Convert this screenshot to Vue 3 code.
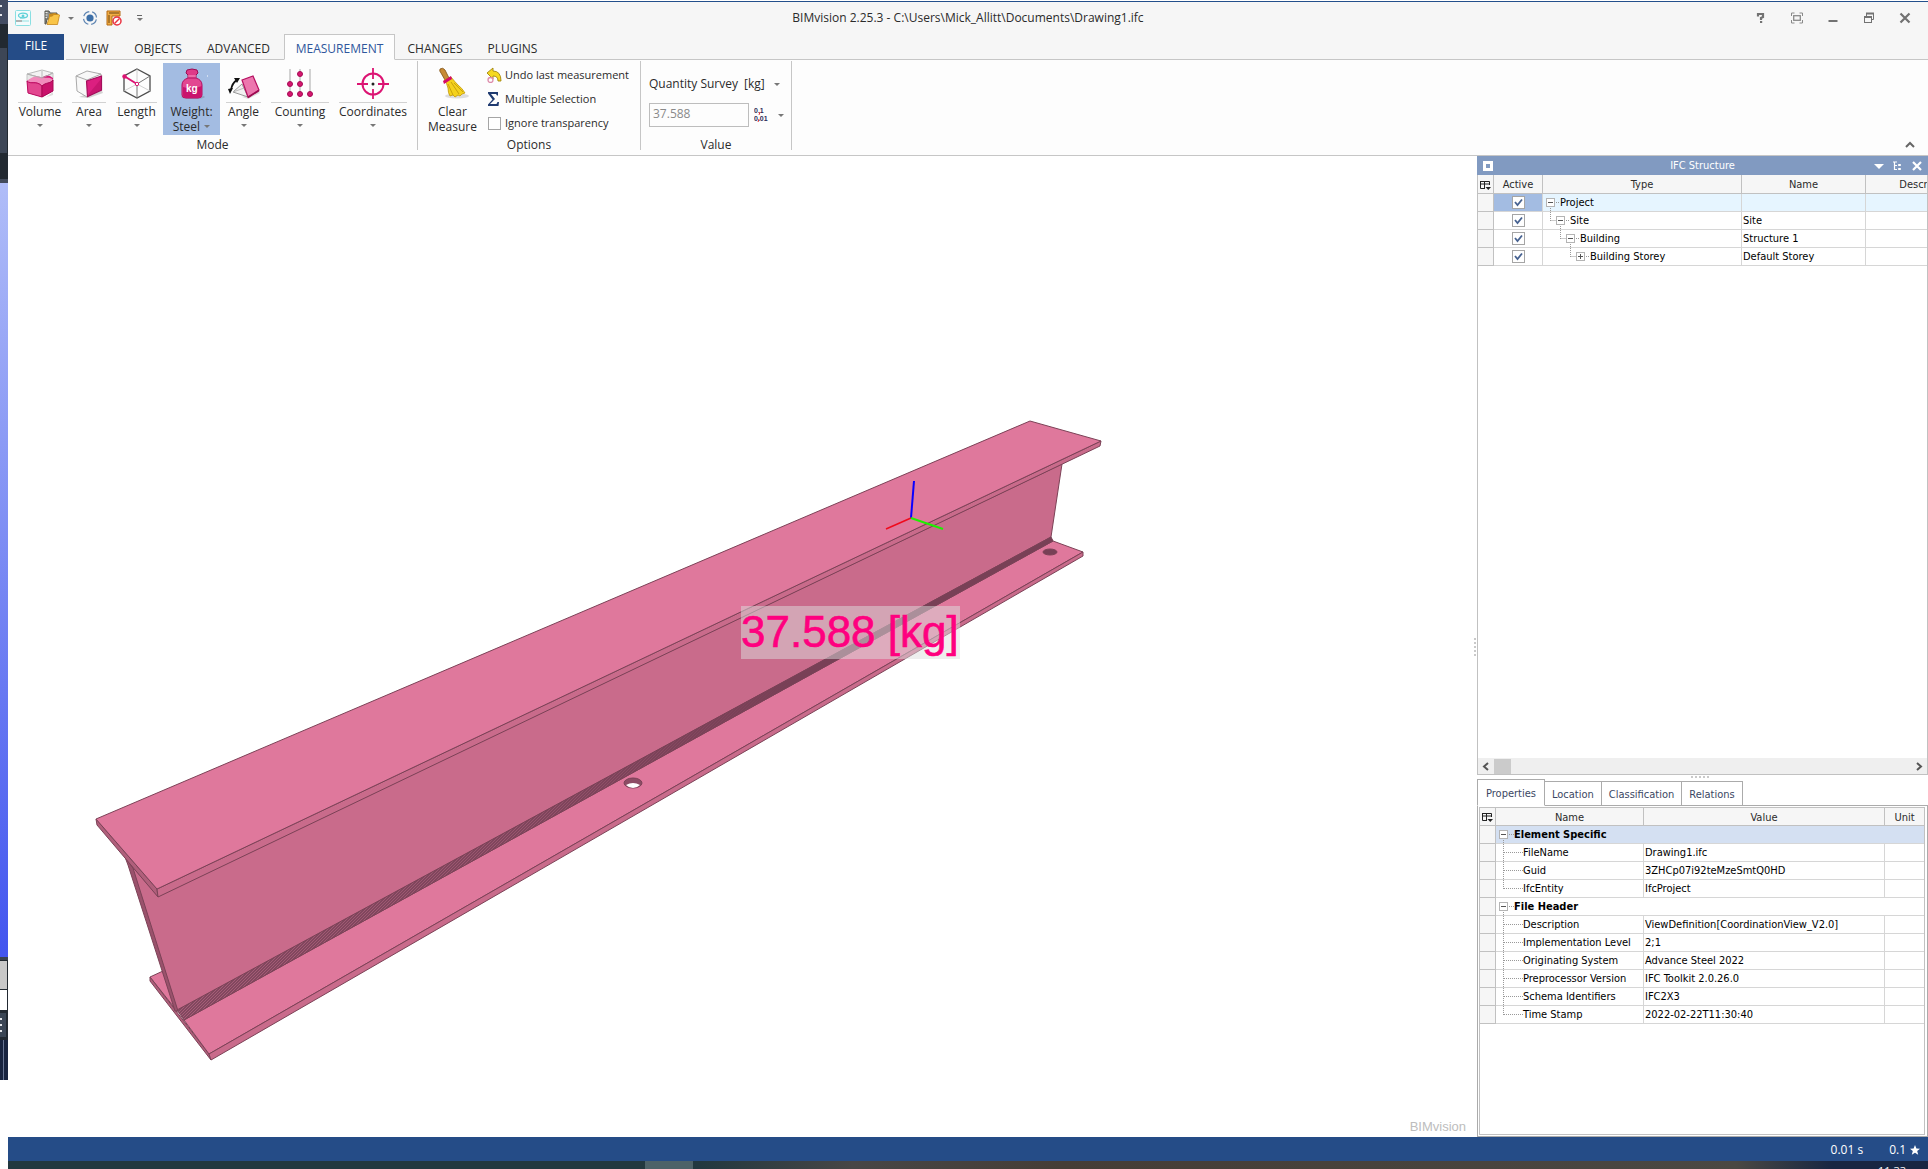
<script setup>
import { ref } from 'vue'

const tabs = [
  { name: 'VIEW', cls: 'w-view' },
  { name: 'OBJECTS', cls: 'w-objects' },
  { name: 'ADVANCED', cls: 'w-advanced' },
  { name: 'MEASUREMENT', cls: 'w-measurement' },
  { name: 'CHANGES', cls: 'w-changes' },
  { name: 'PLUGINS', cls: 'w-plugins' },
]
const activeTab = ref('MEASUREMENT')

const structure = ref([
  { type: 'Project', name: '', level: 0, open: true, active: true },
  { type: 'Site', name: 'Site', level: 1, open: true, active: true },
  { type: 'Building', name: 'Structure 1', level: 2, open: true, active: true },
  { type: 'Building Storey', name: 'Default Storey', level: 3, open: false, active: true },
])

const groups = [
  {
    title: 'Element Specific',
    rows: [
      ['FileName', 'Drawing1.ifc'],
      ['Guid', '3ZHCp07i92teMzeSmtQ0HD'],
      ['IfcEntity', 'IfcProject'],
    ],
  },
  {
    title: 'File Header',
    rows: [
      ['Description', 'ViewDefinition[CoordinationView_V2.0]'],
      ['Implementation Level', '2;1'],
      ['Originating System', 'Advance Steel 2022'],
      ['Preprocessor Version', 'IFC Toolkit 2.0.26.0'],
      ['Schema Identifiers', 'IFC2X3'],
      ['Time Stamp', '2022-02-22T11:30:40'],
    ],
  },
]

const infoTabs = ['Properties', 'Location', 'Classification', 'Relations']
const activeInfo = ref('Properties')
const multiple = ref(false)
const ignoreTransparency = ref(false)
</script>

<template>
  <div class="desktop">
    <div class="behind" aria-hidden="true">
      <i class="b1"><s></s><s></s></i><i class="b2"></i><i class="b3"></i><i class="b4"></i><i class="b5"></i>
      <i class="b6"></i><i class="b7"></i><i class="b8"></i><i class="b9"></i><i class="b10"><s></s><s></s><s></s></i><i class="b11"></i>
    </div>

    <div class="window">
      <header class="titlebar">
        <div class="quick">
          <button class="q-app" aria-label="Application menu">
            <svg width="16" height="16" viewBox="0 0 16 16"><rect x=".5" y=".5" width="15" height="15" rx="1" fill="#f4fbfc" stroke="#8adfe2"/><ellipse cx="8" cy="5.500" rx="4.500" ry="2.300" fill="none" stroke="#62d2d8" stroke-width="1.300"/><path d="M7 5h2v2H7zM5 8.500l5-.8" fill="#62d2d8" stroke="#62d2d8" stroke-width=".6"/><path d="M1 11h6" stroke="#8a8a8a" stroke-width="1.300"/><path d="M7 11h7" stroke="#a9e6e8" stroke-width="1.300"/></svg>
          </button>
          <button class="q-open" aria-label="Open">
            <svg width="16" height="16" viewBox="0 0 16 16"><path d="M1 1h4l1 2h7v6H3l-1 5H1z" fill="#8b8b86" stroke="#55544d"/><path d="M1.500 2.500h2M1.500 5h2M1.500 7.500h1.500" stroke="#e8e8e8"/><path d="M5 4l6-1 2 1v3H5z" fill="#c98b1c"/><path d="M5.500 6.500l3-.5 1-1.500h5l1 .5-2 9.500-10.500 0z" fill="#f9c548" stroke="#c5871a" stroke-width=".8"/></svg>
          </button>
          <button class="q-drop" aria-label="Recent files"><span class="arrow"></span></button>
          <button class="q-target" aria-label="Zoom to selection">
            <svg width="16" height="16" viewBox="0 0 16 16"><circle cx="8" cy="8" r="3.600" fill="#3c6fa8"/><circle cx="8" cy="8" r="6.500" fill="none" stroke="#5d84b2" stroke-width="1.200" stroke-dasharray="7.200 3" stroke-dashoffset="-1.500"/></svg>
          </button>
          <button class="q-ruler" aria-label="Hide measurements">
            <svg width="16" height="16" viewBox="0 0 16 16"><path d="M1 1h13v5H6v9H1z" fill="#f0ad45" stroke="#b66b13"/><path d="M4 2v2M6 2v2M8 2v2M10 2v2M12 2v2M2 6h2M2 8h2M2 10h2M2 12h2" stroke="#6d4510"/><circle cx="11" cy="11" r="4" fill="#fff" stroke="#ea3140" stroke-width="1.500"/><path d="M8.500 13.500l5-5" stroke="#ea3140" stroke-width="1.500"/></svg>
          </button>
          <button class="q-more" aria-label="Customize toolbar"><span class="more-line"></span><span class="arrow"></span></button>
        </div>
        <h1>BIMvision 2.25.3 - C:\Users\Mick_Allitt\Documents\Drawing1.ifc</h1>
        <div class="winbtns">
          <button aria-label="Help"><svg width="12" height="12" viewBox="0 0 12 12"><path d="M3 4.500V2h5v3L6 6v2" fill="none" stroke="#727272" stroke-width="2.200"/><path d="M5 9h2.200v2H5z" fill="#727272"/></svg></button>
          <button aria-label="Full screen"><svg width="12" height="12" viewBox="0 0 12 12"><path d="M.5 4V1h3M8.500 1h3v3M11.500 8v3h-3M3.500 11h-3V8" fill="none" stroke="#8a8a8a"/><rect x="2.700" y="3.700" width="6.600" height="4.600" fill="none" stroke="#8a8a8a" stroke-width="1.300"/></svg></button>
          <button aria-label="Minimize"><svg width="12" height="12" viewBox="0 0 12 12"><path d="M1.500 9h9" stroke="#727272" stroke-width="2"/></svg></button>
          <button aria-label="Restore"><svg width="12" height="12" viewBox="0 0 12 12"><path d="M3.500 4V1.500h7v6H9" fill="none" stroke="#727272"/><path d="M3 1.500h8M1 5h8" stroke="#727272" stroke-width="2"/><rect x="1.500" y="4.500" width="7" height="6" fill="none" stroke="#727272"/></svg></button>
          <button aria-label="Close"><svg width="12" height="12" viewBox="0 0 12 12"><path d="M1.500 1.500l9 9M10.500 1.500l-9 9" stroke="#727272" stroke-width="2.200"/></svg></button>
        </div>
      </header>

      <nav class="tabs">
        <button class="file">FILE</button>
        <button v-for="t in tabs" :key="t.name" class="tab" :class="[t.cls, { on: activeTab === t.name }]" @click="activeTab = t.name">{{ t.name }}</button>
        <span class="rest"></span>
      </nav>

      <section class="ribbon">
        <div class="group mode">
          <div class="tools">
            <button class="big w52">
              <svg class="ico" width="32" height="32" viewBox="0 0 32 32"><path d="M7 29l14 2 8-6v3l-9 3z" fill="#ddd"/><path d="M3 7l15-4 11 3-11 5z" fill="#f3f3f3" stroke="#bbb"/><path d="M3 7v8l15 4 11-5V6L18 11z" fill="#e8e8e8" stroke="#c4c4c4"/><path d="M3 14c5-4 8 2 13-2s8-5 13-1v13l-11 6L4 26z" fill="#d51876"/><path d="M3 14c4 4 9-2 15 5 4-4 8-1 11-6-3-4-7-1-12-3s-9 0-14 4z" fill="#f18cbc"/><path d="M18 19v11L4 26 3 14c4 4 9-1 15 5z" fill="#e2468f" stroke="#ba0e61"/><path d="M18 30l11-6V13c-3 4-7 2-11 6z" fill="#c9126b" stroke="#a90855"/><path d="M18 4v7M3 7l15 4 11-5" fill="none" stroke="#aaa" stroke-width=".8"/></svg>
              <span class="rule"></span><span class="txt">Volume</span><span class="arrow"></span>
            </button>
            <button class="big w42">
              <svg class="ico" width="32" height="32" viewBox="0 0 32 32"><path d="M6 30l10 1 14-5-2-4z" fill="#d4d4d4"/><path d="M3 9l11-5 14 3v15l-14 8L4 24z" fill="#f8f8f8" stroke="#aaa"/><path d="M3 9l11 4 14-6" fill="none" stroke="#aaa"/><path d="M13.500 14L28.500 9v14l-14 6.500z" fill="#dc1f80" stroke="#a30f5b" stroke-width="1.200"/><path d="M14 29l14-6V12z" fill="#bd1065" opacity=".6"/></svg>
              <span class="rule"></span><span class="txt">Area</span><span class="arrow"></span>
            </button>
            <button class="big w49">
              <svg class="ico" width="32" height="32" viewBox="0 0 32 32"><path d="M16 2l13 7v15l-13 7-13-7V9z" fill="none" stroke="#4c4c4c" stroke-width="1.300"/><path d="M16 17v14M16 17l13-8" stroke="#777"/><path d="M16 2v14M3 24l13-7 13 7" stroke="#c4c4c4" fill="none" stroke-width=".8"/><path d="M3 9l13 8" stroke="#dc1473" stroke-width="2"/><circle cx="3.500" cy="9.500" r="2.200" fill="#dc1473"/><circle cx="16" cy="17" r="1.700" fill="#fff" stroke="#dc1473"/></svg>
              <span class="rule"></span><span class="txt">Length</span><span class="arrow"></span>
            </button>
            <button class="big w57 on">
              <svg class="ico" width="32" height="32" viewBox="0 0 32 32"><ellipse cx="17" cy="30" rx="12" ry="2" fill="#8192ae" opacity=".6"/><path d="M11 3q5-2 10 0l1 3-2 2v3l-8 0V8l-2-2z" fill="#df3a88" stroke="#9c0c53"/><path d="M12 9h8M12 11h8" stroke="#ff9ac8"/><path d="M12 11q-6 2-6 7v10q0 3 4 3h12q4 0 4-3V18q0-5-6-7z" fill="#e24891" stroke="#b60d60"/><path d="M7 20q9 3 19-1v9q0 3-4 3H10q-3 0-3-3z" fill="#c9146d"/><text x="10" y="25" font-family="Liberation Sans, sans-serif" font-weight="700" font-size="10" fill="#fff">kg</text><path d="M31 9h1" stroke="#fff"/></svg>
              <span class="txt two">Weight:<br>Steel <span class="arrow inline"></span></span>
            </button>
            <button class="big w43">
              <svg class="ico" width="32" height="32" viewBox="0 0 32 32"><path d="M14 30l16-6 2 2-12 6z" fill="#ddd"/><path d="M5 25l9-8 6 13z" fill="#f1f1f1" stroke="#999"/><path d="M5 25l14-5" stroke="#bbb"/><path d="M14 13l11-4 6 14-11 7z" fill="#ec77ae" stroke="#b50e5f" stroke-width="1.200"/><path d="M20 30.500l11-7" stroke="#9b0b50" stroke-width="1.600"/><path d="M9 13Q4 16 3 23" fill="none" stroke="#111" stroke-width="1.800"/><path d="M12 11H6l3 5zM2 27l-2-5 5-1z" fill="#111"/></svg>
              <span class="rule"></span><span class="txt">Angle</span><span class="arrow"></span>
            </button>
            <button class="big w66">
              <svg class="ico" width="32" height="32" viewBox="0 0 32 32"><path d="M6 2v28M16 2v28M26 2v28" stroke="#d2d2d2" stroke-width="2"/><g fill="#d6166f" stroke="#a50b54"><circle cx="6" cy="17" r="2.500"/><circle cx="6" cy="27" r="2.500"/><circle cx="16" cy="7" r="2.500"/><circle cx="16" cy="17" r="2.500"/><circle cx="16" cy="27" r="2.500"/><circle cx="26" cy="27" r="2.500"/></g></svg>
              <span class="rule"></span><span class="txt">Counting</span><span class="arrow"></span>
            </button>
            <button class="big w76">
              <svg class="ico" width="32" height="32" viewBox="0 0 32 32"><circle cx="16" cy="17" r="10.500" fill="none" stroke="#dc1473" stroke-width="2"/><path d="M16 1v11M16 22v10M0 17h11M21 17h11" stroke="#dc1473" stroke-width="1.800"/><circle cx="16" cy="17" r="1.500" fill="#222"/></svg>
              <span class="rule"></span><span class="txt">Coordinates</span><span class="arrow"></span>
            </button>
          </div>
          <h2>Mode</h2>
        </div>

        <div class="group options">
          <div class="tools">
            <button class="big w57">
              <svg class="ico" width="32" height="32" viewBox="0 0 32 32"><ellipse cx="20" cy="29" rx="12" ry="2.500" fill="#ddd"/><path d="M3 2q3-2 5 1l4 8-4 2L4 6q-2-2-1-4z" fill="#c78a35" stroke="#7f5013" stroke-width=".8"/><path d="M7 13l7-3q4 5 7 8 4 3 7 8l-3 1-2 2-2-1-3 2-2-2-3 1q-2-3-2-8-1-5-4-8z" fill="#f4d21c" stroke="#c19808" stroke-width=".8"/><path d="M11 17l5 11M14 15l8 12M17 16l9 9" stroke="#c9a20c" fill="none"/><path d="M6 14l8-5 1 3-8 5z" fill="#d40c69"/></svg>
              <span class="txt two">Clear<br>Measure</span>
            </button>
            <div class="stack">
              <button class="small">
                <svg width="16" height="16" viewBox="0 0 16 16"><path d="M1 6l6-5v3q8 0 8 10l-3 0q0-5-5-5v3z" fill="#f5d922" stroke="#a3860d" stroke-width=".9"/><circle cx="4.500" cy="13" r="2.500" fill="none" stroke="#dd8bab" stroke-width="1.300"/></svg>
                Undo last measurement
              </button>
              <button class="small" @click="multiple = !multiple">
                <svg width="16" height="16" viewBox="0 0 16 16"><path d="M2 1h10v3.500h-1L10 3H5l4 5-5 5h6.500l1-2H13l-.5 4H2v-1.500L6.500 8.500 2 2.500z" fill="#1f3a70"/></svg>
                Multiple Selection
              </button>
              <label class="small"><input v-model="ignoreTransparency" type="checkbox"> Ignore transparency</label>
            </div>
          </div>
          <h2>Options</h2>
        </div>

        <div class="group value">
          <div class="fields">
            <div class="line">
              <label for="unit">Quantity Survey</label>
              <select id="unit"><option>[kg]</option></select>
              <span class="arrow"></span>
            </div>
            <div class="line">
              <input type="text" value="37.588" readonly aria-label="Measured value">
              <button class="precision" aria-label="Precision">
                <svg width="16" height="16" viewBox="0 0 16 16"><g font-family="Liberation Sans, sans-serif" font-weight="700" font-size="7" fill="#2c2c57"><text x="0" y="6">0.1</text><text x="0" y="14">0.01</text></g><path d="M5 8l1-3M4 15l1-3" stroke="#e33"/></svg>
                <span class="arrow"></span>
              </button>
            </div>
          </div>
          <h2>Value</h2>
        </div>
        <button class="collapse" aria-label="Collapse ribbon"><svg width="10" height="8" viewBox="0 0 10 8"><path d="M1 6l4-4 4 4" fill="none" stroke="#666" stroke-width="2"/></svg></button>
      </section>

      <main class="work">
        <div class="viewport">
          <svg class="scene" viewBox="8 156 1466 981" preserveAspectRatio="xMinYMin meet">
            <defs>
              <pattern id="mesh" width="3" height="3" patternUnits="userSpaceOnUse"><rect width="3" height="3" fill="#82485f"/><path d="M0 3L3 0" stroke="#b0627f" stroke-width=".8"/></pattern>
              <linearGradient id="fade" x1="0" x2="1"><stop offset="0" stop-color="#784056" stop-opacity="0"/><stop offset=".4" stop-color="#784056" stop-opacity=".3"/><stop offset=".7" stop-color="#784056"/></linearGradient>
            </defs>
            <g stroke="#7c4257" stroke-linejoin="round">
              <path d="M150 977L163 971L177 1011Z" fill="#df789c"/>
              <path d="M150 977L209 1054L211 1060L150 981Z" fill="#b05f7b"/>
              <path d="M184 1020L1053 541L1083 552L209 1054Z" fill="#df789c"/>
              <path d="M209 1054L1083 552V556L211 1060Z" fill="#c96b8b"/>
              <path d="M130 864L158 896L1062 464L1051 537L177 1011Z" fill="#c96b8b"/>
              <path d="M125 857L130 864L133 868L178 1011L175 1011L128 865Z" fill="#9a526c"/>
              <path d="M177 1010L1051 537L1053 541L184 1020Z" fill="url(#mesh)"/>
              <path d="M177 1010L1051 537L1053 541L184 1020Z" fill="url(#fade)" stroke="none"/>
              <path d="M96 819L157 889L158 897L125 858L97 825Z" fill="#b05f7b"/>
              <path d="M157 889L1101 441L1100 446L158 897Z" fill="#c96b8b"/>
              <path d="M96 819L1030 421L1101 441L157 889Z" fill="#df789c"/>
              <ellipse cx="633" cy="783" rx="9" ry="5" fill="#8d4c65"/>
              <ellipse cx="1050" cy="552" rx="7" ry="3" fill="#784056"/>
            </g>
            <path d="M626 785Q633 781 640 785Q637 788 633 788Q629 788 626 785Z" fill="#fff"/>
            <path d="M911 518L914 481" stroke="#0a00ff" stroke-width="2"/>
            <path d="M911 518L886 529" stroke="#f00a1c" stroke-width="1.500"/>
            <path d="M911 518L943 529" stroke="#1cf000" stroke-width="2"/>
            <rect x="741" y="606" width="219" height="53" fill="#ddd" fill-opacity=".5"/>
            <text x="741" y="647" font-family="Liberation Sans, Arial, sans-serif" font-size="44" fill="#ff007f" stroke="#ff007f" stroke-width=".6">37.588 [kg]</text>
          </svg>
          <span class="watermark">BIMvision</span>
        </div>
        <div class="vsplit" aria-hidden="true"><i></i><i></i><i></i><i></i><i></i></div>

        <aside class="side">
          <section class="dock">
            <header class="caption">
              <svg width="10" height="10" viewBox="0 0 10 10"><path d="M0 0h10v10H0zM3 3v4h4V3z" fill="#fff" fill-rule="evenodd"/></svg>
              <h2>IFC Structure</h2>
              <button aria-label="Panel menu"><svg width="10" height="10" viewBox="0 0 10 10"><path d="M0 3h10L5 8z" fill="#fff"/></svg></button>
              <button aria-label="Tree options"><svg width="10" height="10" viewBox="0 0 10 10"><path d="M0 1h4M1.500 1v7.500H4M1.500 4.500H4" fill="none" stroke="#fff" stroke-width="1.200"/><path d="M5.500 3.500h2v1h-2zM5.500 7.500h2v1h-2z" fill="#fff" stroke="#fff"/></svg></button>
              <button aria-label="Close panel"><svg width="10" height="10" viewBox="0 0 10 10"><path d="M1 1l8 8M9 1L1 9" stroke="#fff" stroke-width="2.200"/></svg></button>
            </header>
            <div class="treebox">
              <table class="tree">
                <colgroup><col class="c-ind"><col class="c-act"><col class="c-type"><col class="c-name"><col class="c-desc"></colgroup>
                <thead>
                  <tr><th><svg class="colpick" width="11" height="11" viewBox="0 0 11 11"><path d="M.5 1.500h9V5M.5 1v7.500H5M.5 4h9M4.500 1.500v7" fill="none" stroke="#222"/><path d="M5.500 7H11L8.300 10z" fill="#222"/></svg></th><th>Active</th><th>Type</th><th>Name</th><th>Description</th></tr>
                </thead>
                <tbody>
                  <tr v-for="(r, i) in structure" :key="r.type" :class="{ sel: i === 0 }">
                    <td class="ind"></td>
                    <td class="act"><input v-model="r.active" type="checkbox" :aria-label="'Show ' + r.type"></td>
                    <td><div class="node">
                      <button class="twig" :aria-label="'Toggle ' + r.type" @click="r.open = !r.open">
                        <svg :width="17 + r.level * 10" height="18" :viewBox="`0 0 ${17 + r.level * 10} 18`">
                          <path v-if="r.level" :d="`M${r.level * 10 - 2.5} 0V9M${r.level * 10 - 2.5} 8.500h6`" class="dots"/>
                          <path :d="`M${r.level * 10 + 13} 8.500h4`" class="dots"/>
                          <path v-if="r.open && i < structure.length - 1" :d="`M${r.level * 10 + 7.5} 14v4`" class="dots"/>
                          <rect :x="r.level * 10 + 3.5" y="4.500" width="8" height="8" fill="#fff" stroke="#b4b4b4"/>
                          <path :d="`M${r.level * 10 + 5} 8.500h5` + (r.open ? '' : `M${r.level * 10 + 7.5} 6v5`)" stroke="#555"/>
                        </svg>
                      </button><span>{{ r.type }}</span>
                    </div></td>
                    <td class="cell">{{ r.name }}</td>
                    <td></td>
                  </tr>
                </tbody>
              </table>
            </div>
            <div class="hscroll">
              <button aria-label="Scroll left"><svg width="8" height="9" viewBox="0 0 8 9"><path d="M6 1L2 4.500 6 8" fill="none" stroke="#555" stroke-width="2"/></svg></button>
              <span class="thumb"></span>
              <button aria-label="Scroll right"><svg width="8" height="9" viewBox="0 0 8 9"><path d="M2 1l4 3.500L2 8" fill="none" stroke="#555" stroke-width="2"/></svg></button>
            </div>
          </section>
          <div class="hsplit" aria-hidden="true"><i></i><i></i><i></i><i></i><i></i></div>
          <section class="info">
            <div class="infotabs">
              <button v-for="t in infoTabs" :key="t" :class="{ on: activeInfo === t }" @click="activeInfo = t">{{ t }}</button>
              <span class="rest"></span>
            </div>
            <div class="infobody">
              <div class="infogrid">
                <table>
                  <colgroup><col class="c-ind"><col class="p-name"><col><col class="p-unit"></colgroup>
                  <thead>
                    <tr><th><svg class="colpick" width="11" height="11" viewBox="0 0 11 11"><path d="M.5 1.500h9V5M.5 1v7.500H5M.5 4h9M4.500 1.500v7" fill="none" stroke="#222"/><path d="M5.500 7H11L8.300 10z" fill="#222"/></svg></th><th>Name</th><th>Value</th><th>Unit</th></tr>
                  </thead>
                  <tbody v-for="(g, gi) in groups" :key="g.title">
                    <tr class="head" :class="{ picked: gi === 0 }">
                      <td class="ind"></td>
                      <td colspan="3"><div class="node">
                        <button class="twig" :aria-label="'Toggle ' + g.title"><svg width="18" height="18" viewBox="0 0 18 18"><path d="M13 8.500h5M7.500 14v4" class="dots"/><rect x="3.500" y="4.500" width="8" height="8" fill="#fff" stroke="#b4b4b4"/><path d="M5 8.500h5" stroke="#555"/></svg></button><span>{{ g.title }}</span>
                      </div></td>
                    </tr>
                    <tr v-for="(r, i) in g.rows" :key="r[0]">
                      <td class="ind"></td>
                      <td><div class="node"><svg width="27" height="18" viewBox="0 0 27 18"><path :d="(i === g.rows.length - 1 ? 'M7.500 0v9' : 'M7.500 0v18') + 'M8 8.500h19'" class="dots"/></svg><span>{{ r[0] }}</span></div></td>
                      <td class="cell">{{ r[1] }}</td>
                      <td></td>
                    </tr>
                  </tbody>
                </table>
              </div>
            </div>
          </section>
        </aside>
      </main>

      <footer class="status"><span>0.01 s</span><span>0.1 <svg width="10" height="10" viewBox="0 0 10 10"><path d="M5 0l1.400 3.500 3.600.2-2.800 2.300 1 3.700L5 7.700 1.800 9.700l1-3.700L0 3.700l3.600-.2z" fill="#fff"/></svg></span></footer>
      <div class="taskbar"><span class="task"></span><time>11:33</time></div>
    </div>
  </div>
</template>

<style>
body { margin: 0; overflow: hidden; }
</style>

<style scoped>
* { box-sizing: border-box; }
.desktop {
  display: flex;
  height: 100vh;
  background: #fff;
  font: 12px/16px "Open Sans", "Noto Sans", sans-serif;
  color: #2b2b2b;
}
button, input, select { font: inherit; color: inherit; }
button { padding: 0; border: 0; background: none; }
h1, h2 { margin: 0; font: inherit; text-align: center; }
svg { display: block; flex: none; }

.behind { flex: none; width: 8px; margin-bottom: 89px; display: flex; flex-direction: column; overflow: hidden; background: #222931; }
.behind i { display: flex; flex-direction: column; flex: none; }
.behind s { width: 2px; height: 2px; background: #e4e6ea; }
.b1 { height: 24px; background: #434c62; padding-top: 5px; gap: 7px; }
.b2 { height: 24px; }
.b3 { height: 105px; background: #3d4656; margin-right: 1px; }
.b4 { height: 26px; }
.b5 { height: 4px; background: #434b5b; }
.behind .b6 { flex: 1; background: linear-gradient(#b0bdf8, #4255ef); }
.b7 { height: 3px; background: #3a4350; }
.b8 { height: 28px; background: #c8c8c8; margin: 1px 1px 1px 0; }
.b9 { height: 20px; background: #fff; margin: 0 1px 3px 0; }
.b10 { height: 24px; background: #3b4655; margin-right: 2px; padding-top: 5px; gap: 4px; }
.b11 { height: 40px; margin-top: 3px; background: linear-gradient(90deg, #17233f 3px, #667492 3px, #667492 4px, #17233f 4px); }

.window { flex: 1; min-width: 0; display: flex; flex-direction: column; }
.titlebar { flex: none; display: grid; grid-template-columns: 1fr auto 1fr; align-items: center; height: 34px; padding-top: 1px; background: #f6f6f6; border-top: 1px solid #fff; box-shadow: inset 0 1px #24508c; }
.quick { display: flex; align-items: center; padding-left: 7px; }
.q-open { margin-left: 13px; }
.q-drop { margin-left: 8px; }
.q-target { margin-left: 8px; }
.q-ruler { margin-left: 8px; }
.q-more { margin-left: 15px; display: flex; flex-direction: column; gap: 2px; }
.more-line { width: 5px; height: 1px; background: #666; }
.arrow { display: block; width: 0; height: 0; border: 3px solid transparent; border-top-color: #777; border-bottom: 0; }
.winbtns { display: flex; justify-content: flex-end; gap: 24px; padding-right: 17px; }

.tabs { flex: none; display: flex; height: 26px; background: #f6f6f6; }
.tabs button { flex: none; border-bottom: 1px solid #c6c6c6; padding-top: 5px; }
.tabs .file { width: 56px; margin-right: 2px; background: #254c87; border-color: #254c87; color: #fff; padding: 0 0 1px; box-shadow: 2px 0 #f6f6f6; }
.w-view { width: 57px; }
.w-objects { width: 70px; }
.w-advanced { width: 91px; }
.w-measurement { width: 111px; }
.w-changes { width: 80px; }
.w-plugins { width: 75px; }
.tabs .tab.on { border: 1px solid #c6c6c6; border-bottom-color: #fdfdfd; background: #fdfdfd; color: #2f569c; padding-top: 4px; }
.rest { flex: 1; border-bottom: 1px solid #c6c6c6; }

.ribbon { flex: none; display: flex; height: 96px; background: #fdfdfd; border-bottom: 1px solid #c6c6c6; }
.group { display: flex; flex-direction: column; height: 89px; margin-top: 1px; border-right: 1px solid #c6c6c6; }
.group h2 { margin-top: auto; line-height: 10px; }
.group.mode { width: 410px; padding-left: 6px; }
.group.mode h2 { padding-right: 6px; }
.group.options { width: 223px; padding-left: 6px; }
.group.options h2 { padding-right: 6px; }
.group.value { width: 151px; padding-left: 8px; }
.group.value h2 { padding-right: 8px; }
.tools { display: flex; gap: 2px; padding-top: 2px; }
.big { flex: none; display: flex; flex-direction: column; align-items: center; height: 72px; padding: 4px 4px 0; white-space: nowrap; }
.big.on { background: #a3bce2; }
.rule { align-self: stretch; height: 1px; margin-top: 3px; background: #d2d2d2; }
.txt { line-height: 15px; margin-top: 1px; }
.txt.two { margin-top: 5px; }
.big .txt + .arrow { margin-top: 5px; }
.arrow.inline { display: inline-block; vertical-align: 3px; margin-left: 1px; }
.w42 { width: 42px; } .w43 { width: 43px; } .w49 { width: 49px; } .w52 { width: 52px; }
.w57 { width: 57px; } .w66 { width: 66px; } .w76 { width: 76px; }
.stack { display: flex; flex-direction: column; justify-content: space-between; height: 66px; margin: 3px 0 0 3px; }
.small { display: flex; align-items: center; gap: 3px; height: 18px; white-space: nowrap; font-size: 11px; }
input[type="checkbox"] { appearance: none; flex: none; width: 13px; height: 13px; margin: 0; border: 1px solid #a5a5a5; background: #fff; }
.small input { margin: 0 1px 0 2px; }
.fields { display: flex; flex-direction: column; gap: 10px; padding-top: 14px; }
.line { display: flex; align-items: center; white-space: nowrap; }
.line label { width: 95px; line-height: 18px; }
select { appearance: none; width: 30px; padding: 0; border: 0; background: none; }
.line input { width: 100px; height: 24px; padding: 0 3px 3px; border: 1px solid #bdbdbd; background: #fdfdfd; color: #8a8a8a; }
.precision { display: flex; align-items: center; gap: 8px; margin-left: 5px; }
.collapse { margin: auto 13px 6px auto; }

.work { flex: 1; min-height: 0; display: flex; }
.viewport { flex: 1; min-width: 0; position: relative; }
.scene { width: 100%; height: 100%; }
.watermark { position: absolute; right: 8px; bottom: 2px; font: 13px/16px "Liberation Sans", Arial, sans-serif; color: #bdbdbd; }
.vsplit { flex: none; width: 3px; display: flex; flex-direction: column; justify-content: center; gap: 2px; }
.vsplit i, .hsplit i { width: 2px; height: 2px; background: #c9c9c9; }
.side { flex: none; width: 451px; display: flex; flex-direction: column; font: 11px/14px "DejaVu Sans Condensed", "Noto Sans", sans-serif; }
.dock { flex: 1; min-height: 0; display: flex; flex-direction: column; border: 1px solid #c1c1c1; border-top: 0; }
.caption { flex: none; display: flex; align-items: center; gap: 9px; height: 19px; margin: 0 -1px; padding: 0 6px; background: #819ac1; color: #fff; }
.caption h2 { flex: 1; padding-left: 38px; line-height: 16px; padding-top: 1px; }
.treebox { flex: 1; min-height: 0; overflow: hidden; }
table { border-collapse: separate; border-spacing: 0; table-layout: fixed; width: 100%; color: #000; }
.tree { width: 512px; }
.c-ind { width: 16px; } .c-act { width: 49px; } .c-type { width: 199px; } .c-name { width: 124px; } .c-desc { width: 124px; }
.p-name { width: 148px; } .p-unit { width: 39px; }
th { height: 19px; padding: 2px 0 0; background: #f6f6f6; border-right: 1px solid #c1c1c1; border-bottom: 1px solid #c1c1c1; font-weight: 400; color: #2b2b2b; }
.infogrid th { height: 18px; }
td { height: 18px; padding: 0; border-right: 1px solid #d6d6d6; border-bottom: 1px solid #d6d6d6; white-space: nowrap; overflow: hidden; line-height: 16px; }
td.ind { background: #f6f6f6; border-color: #c1c1c1; }
td.cell { padding: 1px 0 0 1px; }
.infogrid td:last-child, .infogrid th:last-child { border-right: 0; }
.colpick { margin: 0 auto; }
.sel td { background: #e6f5ff; }
.sel td.ind { background: #f6f6f6; }
.sel td.act { background: #a3bce2; }
.act input { display: block; margin: 0 auto; }
.act input:checked { background: #fff url("data:image/svg+xml,%3Csvg xmlns='http://www.w3.org/2000/svg' viewBox='0 0 11 11'%3E%3Cpath d='M2 5l2.500 3L9 2.500' fill='none' stroke='%23476291' stroke-width='1.800'/%3E%3C/svg%3E"); }
.node { display: flex; align-items: flex-start; height: 17px; overflow: hidden; }
.node span { padding-top: 1px; }
.twig { flex: none; }
.dots { fill: none; stroke: #999; stroke-dasharray: 1 1; }
.hscroll { flex: none; height: 16px; display: flex; align-items: center; background: #efefef; }
.hscroll button { padding: 0 4px; }
.hscroll .thumb { width: 17px; height: 15px; background: #cbcbcb; margin-right: auto; }
.hsplit { flex: none; height: 4px; display: flex; align-items: center; justify-content: center; gap: 2px; padding-right: 6px; }
.info { flex: none; height: 358px; display: flex; flex-direction: column; }
.infotabs { flex: none; display: flex; height: 27px; align-items: flex-end; }
.infotabs button { height: 25px; padding: 2px 7px 0; border: 1px solid #ababab; border-left-width: 0; color: #3b4763; }
.infotabs button.on { height: 27px; padding: 2px 8px 0; border-left-width: 1px; border-bottom-color: #fff; }
.infotabs .rest { border-color: #ababab; }
.infobody { flex: 1; min-height: 0; padding: 1px 2px 1px 1px; border: 1px solid #ababab; border-top: 0; }
.infogrid { height: 100%; border: 1px solid #c1c1c1; }
.head { font-weight: 700; }
.picked td { background: #d4e0f2; }
.picked td.ind { background: #f6f6f6; }

.status { flex: none; height: 24px; display: flex; align-items: center; justify-content: flex-end; gap: 26px; padding: 2px 8px 0 0; background: #254c87; color: #fff; }
.status span { display: flex; align-items: center; gap: 4px; }
.taskbar { flex: none; height: 8px; display: flex; overflow: hidden; background: linear-gradient(90deg, #22383f 0, #22383f 36%, #474646 44%, #453d36 55%, #4a4843 90%, #182642 95%); color: #fff; }
.task { width: 48px; height: 8px; margin-left: 637px; background: #4d6268; }
.taskbar time { margin: 2px 22px 0 auto; font-size: 11px; }
</style>
